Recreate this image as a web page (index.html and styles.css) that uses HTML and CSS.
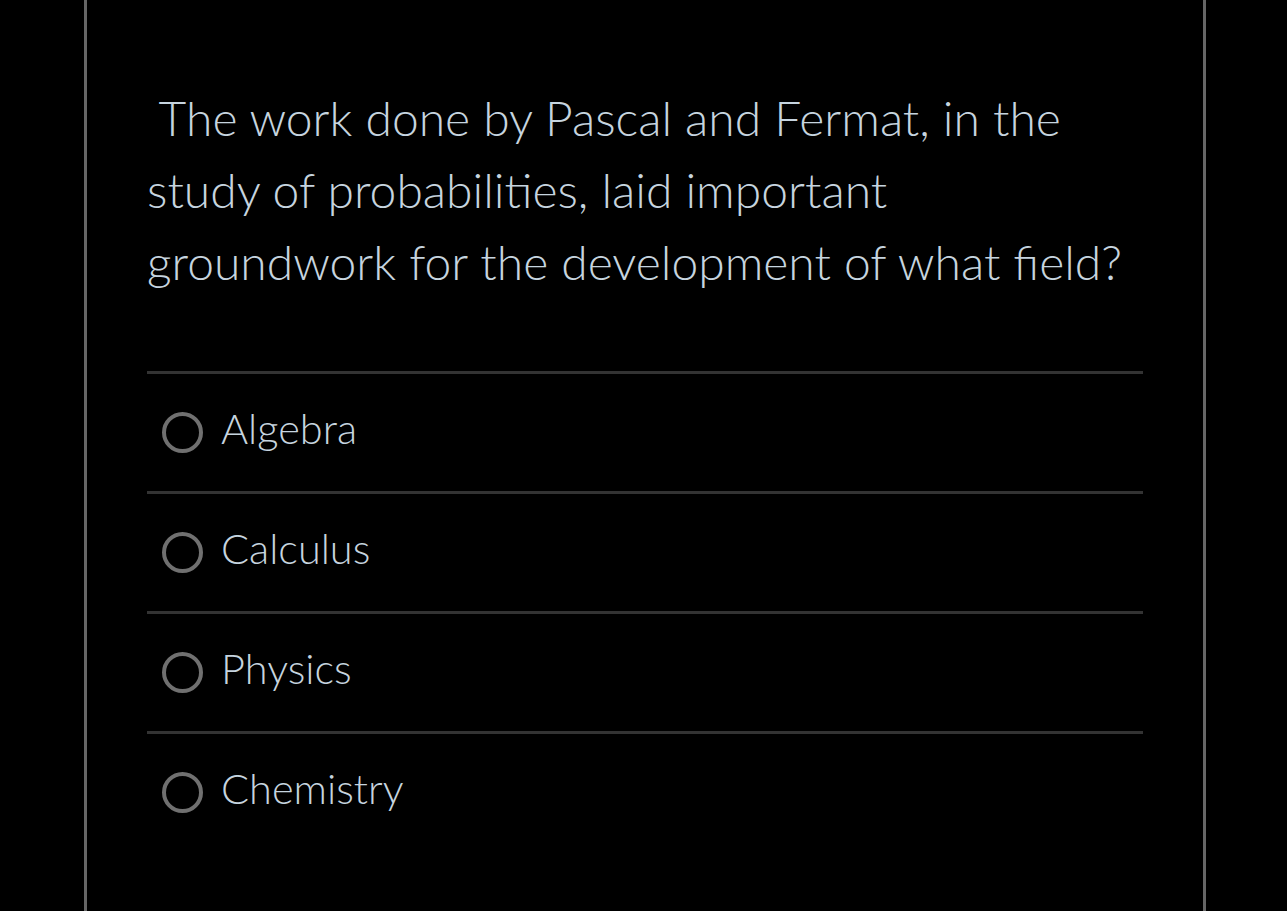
FILE: index.html
```html
<!DOCTYPE html>
<html lang="en">
<head>
    <meta charset="UTF-8">
    <meta name="viewport" content="width=device-width, initial-scale=1.0">
    <title>Quiz Question</title>
    <link rel="stylesheet" href="styles.css">
</head>
<body>
    <div class="quiz">
        <p class="question">&nbsp;The work done by Pascal and Fermat, in the study of probabilities, laid important groundwork for the development of what field?</p>

        <div class="options">
            <label class="option">
                <span class="radio"></span>
                <span class="option-text">Algebra</span>
            </label>
            <label class="option">
                <span class="radio"></span>
                <span class="option-text">Calculus</span>
            </label>
            <label class="option">
                <span class="radio"></span>
                <span class="option-text">Physics</span>
            </label>
            <label class="option">
                <span class="radio"></span>
                <span class="option-text">Chemistry</span>
            </label>
        </div>
    </div>
</body>
</html>
```

FILE: styles.css
```css
body, html {
    height: 100%;
    margin: 0;
    background: #000;
    font-family: Lato, "Open Sans", sans-serif;
    overflow: hidden;
}
.quiz {
    width: 1122px;
    min-height: 100%;
    margin-left: 84px;
    padding: 82px 60px 0 60px;
    box-sizing: border-box;
    border-left: 3px solid #666;
    border-right: 3px solid #666;
}
.question {
    margin: 0;
    font-size: 48px;
    font-weight: 300;
    line-height: 72px;
    color: #c6d4df;
}
.options {
    margin-top: 73px;
}
.option {
    display: flex;
    align-items: center;
    gap: 18px;
    height: 117px;
    padding-left: 15px;
    border-top: 3px solid #333;
    cursor: pointer;
}
.radio {
    width: 33px;
    height: 33px;
    border: 4px solid #707070;
    border-radius: 50%;
    flex-shrink: 0;
}
.option-text {
    padding-bottom: 10px;
    font-size: 41.5px;
    font-weight: 300;
    color: #c6d4df;
}
```
